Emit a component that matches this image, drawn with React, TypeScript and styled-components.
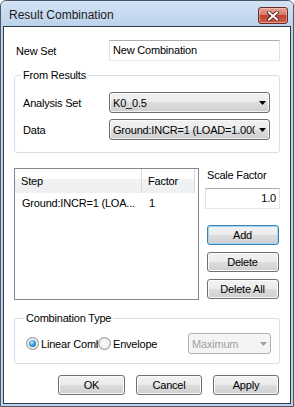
import React from 'react';
import styled, { createGlobalStyle, css } from 'styled-components';

const GlobalStyle = createGlobalStyle`
  html, body { margin: 0; padding: 0; background: #ffffff; }
  body {
    font-family: "Liberation Sans", Arial, sans-serif;
    font-size: 11px;
    letter-spacing: -0.2px;
    color: #000000;
  }
  #root { width: 294px; height: 407px; }
  *, *::before, *::after { box-sizing: border-box; }
`;

const Window = styled.div`
  width: 294px;
  height: 407px;
  border: 1px solid #4d5866;
  border-radius: 6px 6px 0 0;
  background: #bdd3ec;
  display: flex;
  flex-direction: column;
  overflow: hidden;
`;

const TitleBar = styled.div`
  height: 25px;
  flex: none;
  display: flex;
  align-items: flex-start;
  padding: 6px 5px 0 8px;
  background: linear-gradient(#d3e3f5, #bcd2eb);
`;

const TitleText = styled.div`
  flex: 1;
  margin-top: 1px;
  font-size: 12px;
  line-height: 15px;
  letter-spacing: 0;
  color: #1a1a1a;
`;

const CloseButton = styled.button`
  width: 30px;
  height: 17px;
  padding: 0;
  border: 1px solid #6e2b23;
  border-radius: 3px;
  background: linear-gradient(#e6a497 0%, #d6796b 45%, #c04332 50%, #cf5e4b 100%);
  box-shadow: inset 0 0 0 1px rgba(255, 220, 210, 0.45);
  display: flex;
  align-items: center;
  justify-content: center;
`;

const Client = styled.div`
  flex: 1;
  margin: 0 2px 2px 2px;
  border: 1px solid #303a46;
  background: #ffffff;
  display: flex;
  flex-direction: column;
  padding: 13px 10px 0 10px;
`;

const FieldRow = styled.div`
  display: flex;
  align-items: center;
  height: 21px;
`;

const Label = styled.span<{ $indent?: number }>`
  flex: 1;
  padding-left: ${(p) => p.$indent ?? 0}px;
  white-space: nowrap;
`;

const TextBox = styled.div<{ $width: number; $align?: string }>`
  width: ${(p) => p.$width}px;
  height: 21px;
  border: 1px solid;
  border-color: #abadb3 #dbdfe6 #e3e9ef #e2e3ea;
  padding: 0 3px;
  line-height: 19px;
  text-align: ${(p) => p.$align ?? 'left'};
  background: #ffffff;
  white-space: nowrap;
  overflow: hidden;
`;

const GroupBox = styled.fieldset<{ $mt: number; $pad: string }>`
  margin: ${(p) => p.$mt}px 0 0 0;
  padding: ${(p) => p.$pad};
  border: 1px solid #d5dfe5;
  border-radius: 3px;
  min-width: 0;
  display: flex;
  flex-direction: column;
  gap: 6px;
`;

const Legend = styled.legend`
  margin-left: -2px;
  padding: 0 2px;
  line-height: 13px;
  font-size: 11px;
`;

const comboBase = css`
  height: 21px;
  border-radius: 3px;
  display: flex;
  align-items: center;
  padding: 0 3px 0 3px;
`;

const Combo = styled.div<{ $width: number; $disabled?: boolean }>`
  ${comboBase};
  width: ${(p) => p.$width}px;
  ${(p) =>
    p.$disabled
      ? css`
          margin-left: auto;
          border: 1px solid #adb2b5;
          background: #f4f4f4;
          color: #a0a0a0;
        `
      : css`
          border: 1px solid #707070;
          background: linear-gradient(#f2f2f2 0%, #ebebeb 50%, #dddddd 50%, #cfcfcf 100%);
          box-shadow: inset 0 0 0 1px rgba(255, 255, 255, 0.7);
          color: #000000;
        `}
`;

const ComboText = styled.span`
  flex: 1;
  min-width: 0;
  overflow: hidden;
  white-space: nowrap;
`;

const ArrowIcon = styled.svg`
  flex: none;
  margin-left: 4px;
`;

const MiddleRow = styled.div`
  display: flex;
  gap: 6px;
  margin-top: 15px;
  height: 132px;
`;

const ListView = styled.div`
  width: 185px;
  height: 132px;
  border: 1px solid #828790;
  background: #ffffff;
  display: flex;
  flex-direction: column;
`;

const HeaderRow = styled.div`
  display: flex;
  height: 24px;
  align-self: flex-start;
  background: linear-gradient(#ffffff 0%, #ffffff 42%, #f1f2f4 42%, #eff0f2 100%);
`;

const HeaderCell = styled.div<{ $width: number }>`
  width: ${(p) => p.$width}px;
  padding-left: 6px;
  line-height: 24px;
  border-right: 1px solid #d8dadd;
  white-space: nowrap;
  overflow: hidden;
`;

const DataRow = styled.div`
  display: flex;
  height: 20px;
`;

const DataCell = styled.div<{ $width: number }>`
  width: ${(p) => p.$width}px;
  padding-left: 7px;
  line-height: 20px;
  white-space: nowrap;
  overflow: hidden;
`;

const SideColumn = styled.div`
  width: 75px;
  display: flex;
  flex-direction: column;
`;

const SideLabel = styled.div`
  margin-top: 1px;
  padding-left: 2px;
  line-height: 13px;
  margin-bottom: 6px;
`;

const SideButtons = styled.div`
  margin-top: 16px;
  display: flex;
  flex-direction: column;
  align-items: center;
  gap: 7px;
`;

const PushButton = styled.button<{ $width: number; $default?: boolean }>`
  width: ${(p) => p.$width}px;
  height: 20px;
  padding: 0;
  font: inherit;
  letter-spacing: inherit;
  color: #000000;
  border: 1px solid ${(p) => (p.$default ? '#3c7fb1' : '#707070')};
  border-radius: 3px;
  background: linear-gradient(#f2f2f2 0%, #ebebeb 50%, #dddddd 50%, #cfcfcf 100%);
  box-shadow: inset 0 0 0 1px ${(p) => (p.$default ? '#9cd9f7' : '#fbfbfb')};
  line-height: 18px;
  text-align: center;
`;

const OptionRow = styled.div`
  display: flex;
  align-items: center;
  height: 21px;
`;

const RadioOption = styled.label<{ $width?: number }>`
  display: flex;
  align-items: center;
  gap: 2px;
  ${(p) => (p.$width ? `width: ${p.$width}px;` : '')}
  overflow: hidden;
  white-space: nowrap;
  flex: none;
`;

const RadioCircle = styled.span<{ $checked?: boolean }>`
  width: 13px;
  height: 13px;
  flex: none;
  border-radius: 50%;
  border: 1px solid #8e8f8f;
  background: radial-gradient(circle at 50% 50%, #ffffff 0%, #f0f0f0 50%, #d6d6d6 100%);
  display: flex;
  align-items: center;
  justify-content: center;
  &::after {
    content: '';
    width: 7px;
    height: 7px;
    border-radius: 50%;
    display: ${(p) => (p.$checked ? 'block' : 'none')};
    background: radial-gradient(circle at 40% 35%, #c8ecff 0%, #3c9ede 45%, #0c4f91 100%);
  }
`;

const ButtonBar = styled.div`
  display: flex;
  justify-content: flex-end;
  gap: 11px;
  margin-top: 11px;
  padding-right: 1px;
`;

const DownArrow = ({ color = '#000000' }: { color?: string }) => (
  <ArrowIcon width="7" height="4" viewBox="0 0 7 4">
    <polygon points="0,0 7,0 3.5,4" fill={color} />
  </ArrowIcon>
);

export default function App() {
  return (
    <>
      <GlobalStyle />
      <Window>
        <TitleBar>
          <TitleText>Result Combination</TitleText>
          <CloseButton aria-label="Close">
            <svg width="12" height="10" viewBox="0 0 12 10">
              <path d="M2 1.5 L10 8.5 M10 1.5 L2 8.5" stroke="#4b1c15" strokeWidth="3.6" strokeLinecap="square" />
              <path d="M2 1.5 L10 8.5 M10 1.5 L2 8.5" stroke="#ffffff" strokeWidth="2" strokeLinecap="square" />
            </svg>
          </CloseButton>
        </TitleBar>
        <Client>
          <FieldRow>
            <Label $indent={2}>New Set</Label>
            <TextBox $width={171}>New Combination</TextBox>
          </FieldRow>

          <GroupBox $mt={8} $pad="10px 9px 12px 8px">
            <Legend>From Results</Legend>
            <FieldRow>
              <Label>Analysis Set</Label>
              <Combo $width={161}>
                <ComboText>K0_0.5</ComboText>
                <DownArrow />
              </Combo>
            </FieldRow>
            <FieldRow>
              <Label>Data</Label>
              <Combo $width={161}>
                <ComboText>Ground:INCR=1 (LOAD=1.000)</ComboText>
                <DownArrow />
              </Combo>
            </FieldRow>
          </GroupBox>

          <MiddleRow>
            <ListView>
              <HeaderRow>
                <HeaderCell $width={127}>Step</HeaderCell>
                <HeaderCell $width={53}>Factor</HeaderCell>
              </HeaderRow>
              <DataRow>
                <DataCell $width={127}>Ground:INCR=1 (LOA...</DataCell>
                <DataCell $width={53}>1</DataCell>
              </DataRow>
            </ListView>
            <SideColumn>
              <SideLabel>Scale Factor</SideLabel>
              <TextBox $width={75} $align="right">1.0</TextBox>
              <SideButtons>
                <PushButton $width={72} $default>Add</PushButton>
                <PushButton $width={72}>Delete</PushButton>
                <PushButton $width={72}>Delete All</PushButton>
              </SideButtons>
            </SideColumn>
          </MiddleRow>

          <GroupBox $mt={12} $pad="8px 8px 9px 11px">
            <Legend>Combination Type</Legend>
            <OptionRow>
              <RadioOption $width={72}>
                <RadioCircle $checked />
                <span>Linear Combination</span>
              </RadioOption>
              <RadioOption>
                <RadioCircle />
                <span>Envelope</span>
              </RadioOption>
              <Combo $width={83} $disabled>
                <ComboText>Maximum</ComboText>
                <DownArrow color="#a0a0a0" />
              </Combo>
            </OptionRow>
          </GroupBox>

          <ButtonBar>
            <PushButton $width={67}>OK</PushButton>
            <PushButton $width={66}>Cancel</PushButton>
            <PushButton $width={66}>Apply</PushButton>
          </ButtonBar>
        </Client>
      </Window>
    </>
  );
}
